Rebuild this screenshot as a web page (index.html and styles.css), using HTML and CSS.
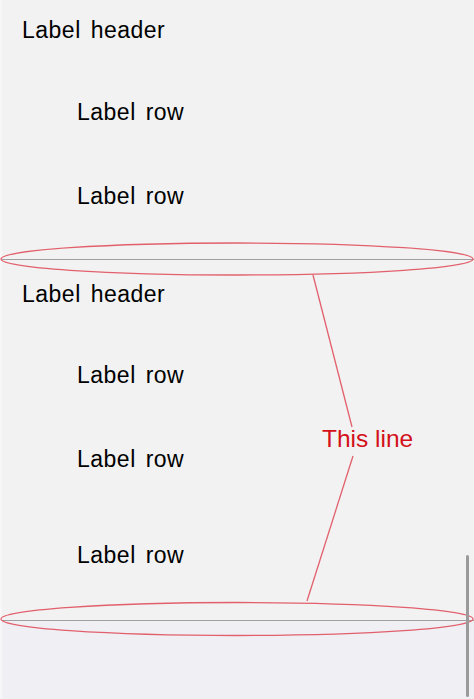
FILE: index.html
```html
<!DOCTYPE html>
<html lang="en">
<head>
    <meta charset="UTF-8">
    <meta name="viewport" content="width=device-width, initial-scale=1.0">
    <title>Grouped list separators</title>
    <link rel="stylesheet" href="styles.css">
</head>
<body>
    <div class="screen">
        <div class="list">
            <section class="group group-first">
                <div class="header">Label header</div>
                <div class="row">Label row</div>
                <div class="row">Label row</div>
            </section>
            <div class="separator"></div>

            <section class="group group-second">
                <div class="header">Label header</div>
                <div class="row">Label row</div>
                <div class="row">Label row</div>
                <div class="row row-tall">Label row</div>
            </section>
            <div class="separator"></div>
        </div>

        <div class="footer"></div>

        <!-- Callout marking the two separators -->
        <svg class="callout" width="474" height="699" viewBox="0 0 474 699">
            <ellipse cx="237" cy="259" rx="236" ry="16" />
            <ellipse cx="237" cy="619" rx="236" ry="16.5" />
            <line x1="313" y1="275" x2="352" y2="427" />
            <line x1="353" y1="456" x2="307" y2="601" />
            <text x="322" y="447">This line</text>
        </svg>

        <div class="scroll-thumb"></div>
    </div>
</body>
</html>
```

FILE: styles.css
```css
body {
    margin: 0;
    font-family: "Liberation Sans", Arial, sans-serif;
    color: #000;
}
.screen {
    position: relative;
    width: 474px;
    height: 699px;
    overflow: hidden;
    display: flex;
    flex-direction: column;
    background-color: #efeff4;
}
.list {
    background-color: #f2f2f2;
    border-left: 2px solid #f7f7f7;
}
.group {
    display: flex;
    flex-direction: column;
}
.group-first {
    padding-bottom: 21px;
}
.group-second {
    padding-bottom: 11px;
}
.header {
    font-size: 23px;
    letter-spacing: 0.5px;
    word-spacing: 3px;
    line-height: 24px;
    padding: 18px 0 28px 20px;
}
.group-second .header {
    padding-top: 22px;
    padding-bottom: 27px;
}
.row {
    font-size: 23px;
    letter-spacing: 0.5px;
    word-spacing: 3px;
    height: 84px;
    line-height: 84px;
    padding-left: 75px;
}
.row-tall {
    height: 108px;
    line-height: 108px;
}
.separator {
    height: 1px;
    background-color: #a0a0a0;
}
.footer {
    flex: 1;
    border-left: 2px solid #f6f6f9;
}
.callout {
    position: absolute;
    left: 0;
    top: 0;
    pointer-events: none;
}
.callout ellipse,
.callout line {
    fill: none;
    stroke: #e2606c;
    stroke-width: 1.3;
}
.callout text {
    fill: #d4101a;
    font-family: "Liberation Sans", Arial, sans-serif;
    font-size: 24.5px;
}
.scroll-thumb {
    position: absolute;
    right: 5px;
    top: 555px;
    bottom: 2px;
    width: 3px;
    border-radius: 2px;
    background-color: #9a9a9a;
}
```
